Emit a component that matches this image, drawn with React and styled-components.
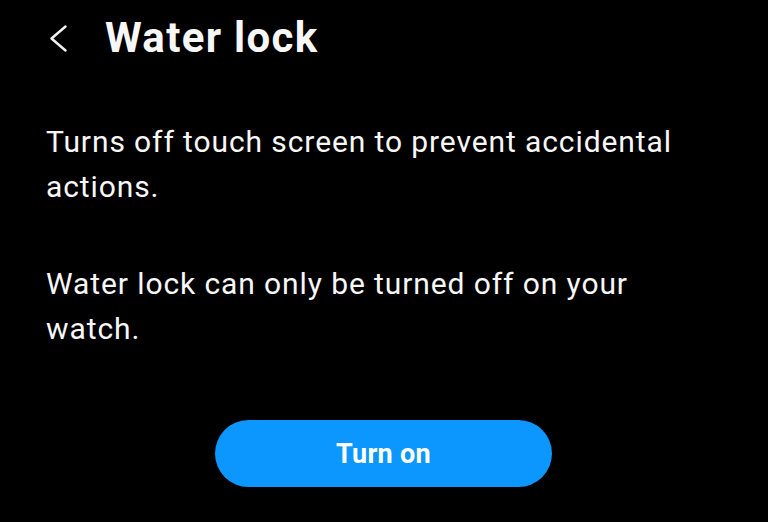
import React from "react";
import styled, { createGlobalStyle } from "styled-components";

const Global = createGlobalStyle`
  html, body { margin: 0; padding: 0; background: #000; }
  body { font-family: Roboto, "Noto Sans", sans-serif; color: #f7f7f7; }
`;

const Page = styled.div`
  width: 768px;
  height: 522px;
  background: #000;
  display: flex;
  flex-direction: column;
  box-sizing: border-box;
  padding-top: 13px;
  overflow: hidden;
`;

const Header = styled.header`
  display: flex;
  align-items: center;
  padding-left: 49px;
  gap: 38px;
`;

const BackButton = styled.button`
  background: none;
  border: 0;
  padding: 0;
  display: flex;
  color: #f7f7f7;
  cursor: pointer;
`;

const Title = styled.h1`
  margin: 0;
  font-size: 42px;
  line-height: 1.2;
  font-weight: 700;
  letter-spacing: 1.3px;
`;

const Content = styled.main`
  display: flex;
  flex-direction: column;
  padding: 56px 46px 0 46px;
  gap: 52px;
`;

const Paragraph = styled.p`
  margin: 0;
  font-size: 30px;
  line-height: 45px;
  font-weight: 400;
  letter-spacing: 0.9px;
  max-width: 660px;
`;

const Footer = styled.div`
  display: flex;
  justify-content: center;
  padding-top: 69px;
  padding-right: 1px;
`;

const PrimaryButton = styled.button`
  width: 337px;
  height: 67px;
  border: 0;
  border-radius: 34px;
  background: #0b97fd;
  color: #fff;
  font-family: Roboto, "Noto Sans", sans-serif;
  font-size: 27px;
  font-weight: 700;
  letter-spacing: 0.3px;
  cursor: pointer;
`;

export default function App() {
  return (
    <>
      <Global />
      <Page>
        <Header>
          <BackButton aria-label="Back">
            <svg width="18" height="27" viewBox="0 0 18 27" fill="none">
              <path d="M16.5 1.5 L2.5 13.5 L16.5 25.5" stroke="#f2f2f2" strokeWidth="2.4" strokeLinecap="round" strokeLinejoin="round" />
            </svg>
          </BackButton>
          <Title>Water lock</Title>
        </Header>
        <Content>
          <Paragraph>Turns off touch screen to prevent accidental actions.</Paragraph>
          <Paragraph>Water lock can only be turned off on your watch.</Paragraph>
        </Content>
        <Footer>
          <PrimaryButton>Turn on</PrimaryButton>
        </Footer>
      </Page>
    </>
  );
}
